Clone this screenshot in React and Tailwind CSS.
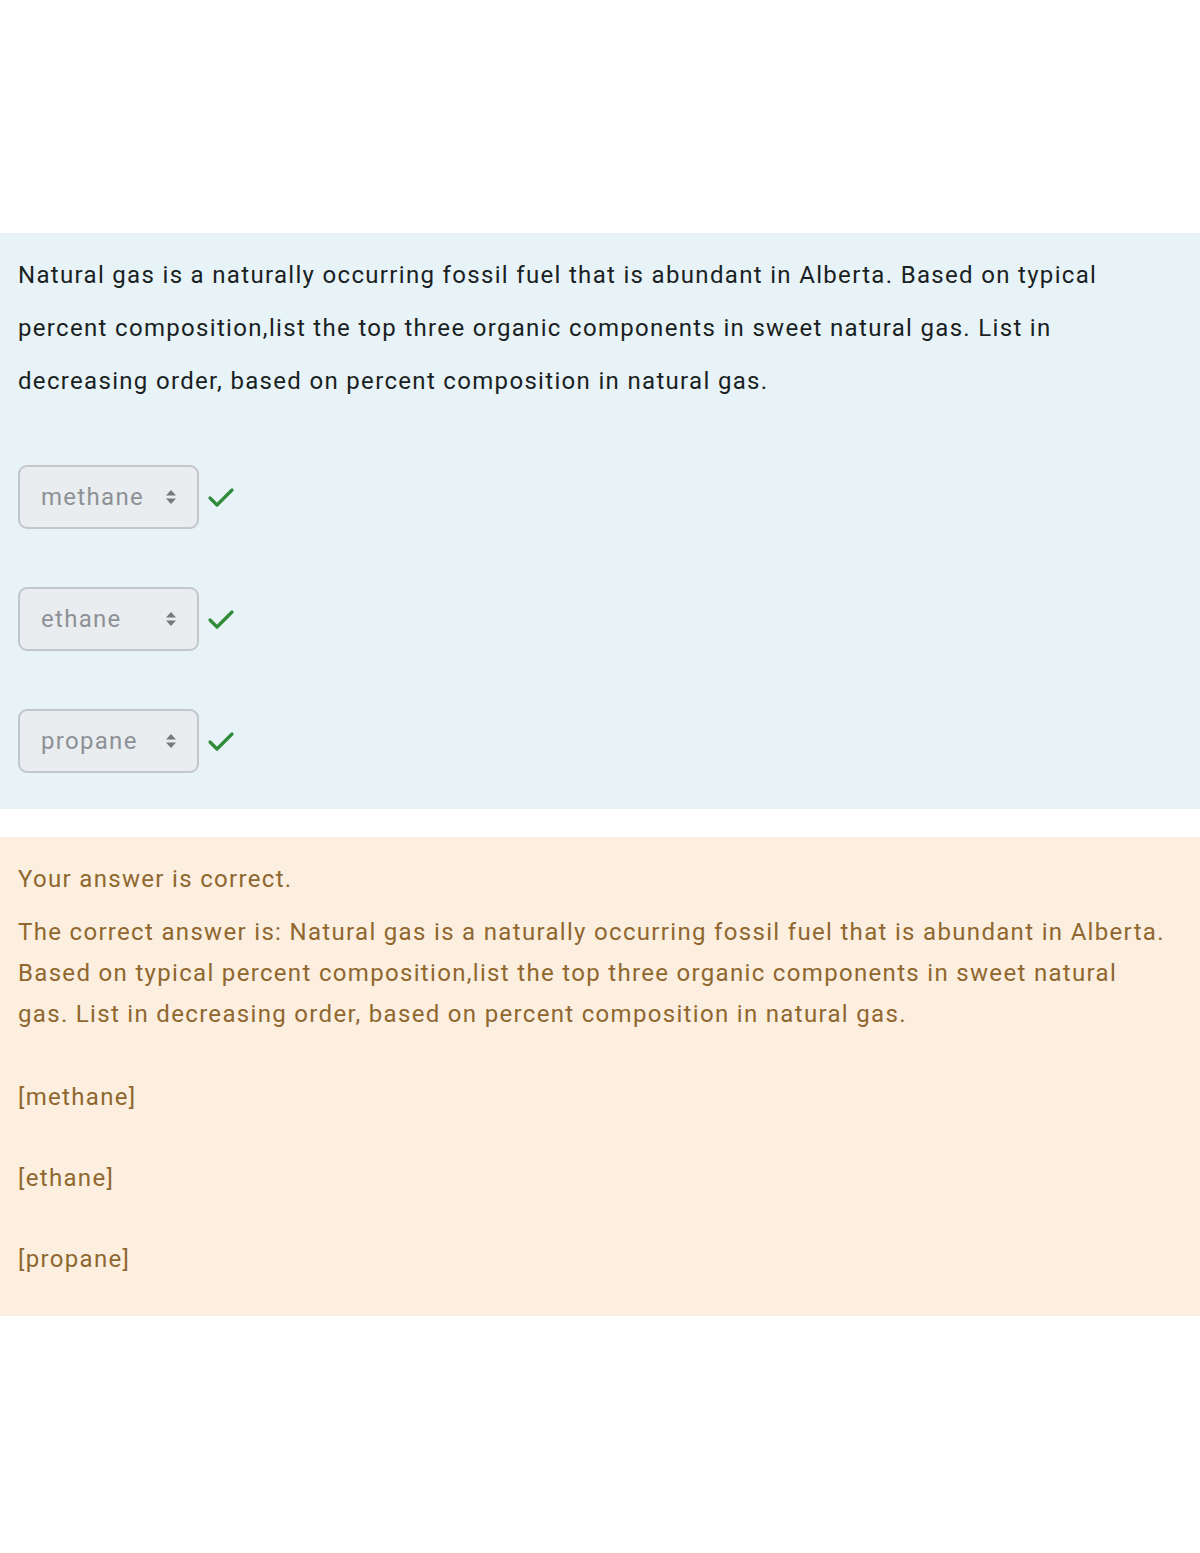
import React from "react";

const answers = ["methane", "ethane", "propane"];

const Arrows = () => (
  <svg width="12" height="18" viewBox="0 0 12 18" className="shrink-0">
    <path d="M6 2 L11 7.5 H1 Z" fill="#75797d" />
    <path d="M6 16 L11 10.5 H1 Z" fill="#75797d" />
  </svg>
);

const Check = () => (
  <svg width="28" height="22" viewBox="0 0 28 22" className="shrink-0">
    <path
      d="M3 12 L10 19 L25 4"
      fill="none"
      stroke="#2f8a3a"
      strokeWidth="3.2"
      strokeLinecap="round"
      strokeLinejoin="round"
    />
  </svg>
);

const SelectBox = ({ value }) => (
  <div className="flex items-center gap-2">
    <div className="flex h-[64px] w-[181px] items-center justify-between rounded-[9px] border-2 border-[#c3c7cb] bg-[#e9edf0] pl-[21px] pr-[20px] text-[24px] tracking-[1.3px] text-[#8d9195]">
      <span>{value}</span>
      <Arrows />
    </div>
    <Check />
  </div>
);

export default function App() {
  return (
    <div
      className="min-h-[1553px] w-[1200px] bg-white"
      style={{ fontFamily: "Roboto, 'Noto Sans', sans-serif" }}
    >
      <div className="h-[233px]" />

      <div className="bg-[#e7f3f6] pb-[36px] pl-[18px] pr-[32px] pt-[16px]">
        <p className="text-[24px] leading-[53px] tracking-[1.32px] text-[#1a1f23]">
          Natural gas is a naturally occurring fossil fuel that is abundant in
          Alberta. Based on typical percent composition,list the top three
          organic components in sweet natural gas. List in decreasing order,
          based on percent composition in natural gas.
        </p>
        <div className="mt-[57px] flex flex-col gap-[58px]">
          {answers.map((a) => (
            <SelectBox key={a} value={a} />
          ))}
        </div>
      </div>

      <div className="h-[28px]" />

      <div className="bg-[#fcefdf] pb-[36px] pl-[18px] pr-[32px] pt-[22px] text-[24px] leading-[41px] tracking-[1.32px] text-[#8f672f]">
        <p>Your answer is correct.</p>
        <p className="mt-[12px]">
          The correct answer is: Natural gas is a naturally occurring fossil
          fuel that is abundant in Alberta. Based on typical percent
          composition,list the top three organic components in sweet natural
          gas. List in decreasing order, based on percent composition in
          natural gas.
        </p>
        <div className="mt-[42px] flex flex-col gap-[40px]">
          {answers.map((a) => (
            <p key={a}>[{a}]</p>
          ))}
        </div>
      </div>
    </div>
  );
}
